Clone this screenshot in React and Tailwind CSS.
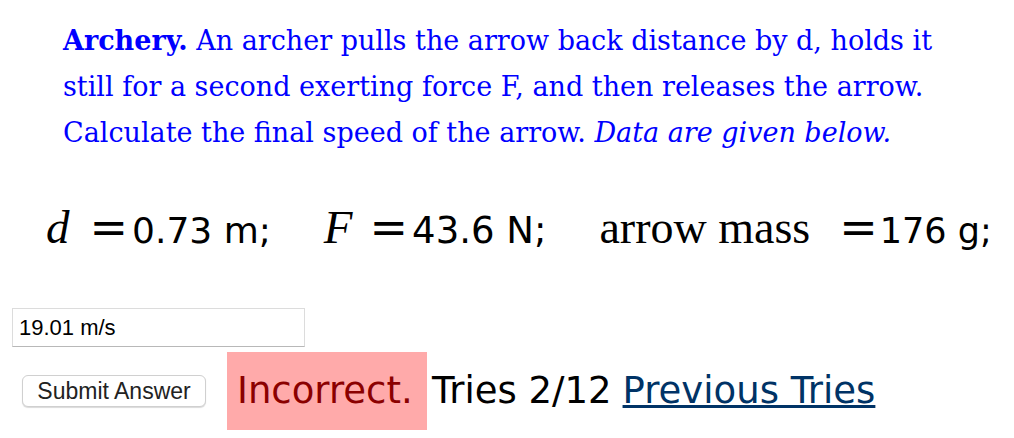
export default function App() {
    return (
        <div className="w-[1014px] h-[438px] bg-white overflow-hidden">
            <div className="pl-[63px] pt-[18px] pr-[60px] text-[#0000ff] text-[27px] leading-[46px] font-['DejaVu_Serif',serif]">
                <b>Archery.</b> An archer pulls the arrow back distance by d, holds it still for a second exerting force F, and then releases the arrow. Calculate the final speed of the arrow. <i>Data are given below.</i>
            </div>

            {/* given data */}
            <div className="flex items-baseline pl-[46px] mt-[46px] text-[37px] leading-[50px] text-black font-['DejaVu_Sans',sans-serif]">
                <span className="italic text-[47px] font-['Liberation_Serif',serif]">d</span>
                <span className="ml-[20px] text-[46px]">=</span>
                <span className="ml-[4px] text-[36px]">0.73 m;</span>
                <span className="ml-[53px] italic text-[47px] font-['Liberation_Serif',serif]">F</span>
                <span className="ml-[17px] text-[46px]">=</span>
                <span className="ml-[4px]">43.6 N;</span>
                <span className="ml-[53px] text-[46px] font-['Liberation_Serif',serif]">arrow mass</span>
                <span className="ml-[29px] text-[46px]">=</span>
                <span className="ml-[2px] text-[35px]">176 g;</span>
            </div>

            <div className="pl-[12px] mt-[52px]">
                <input
                    type="text"
                    defaultValue="19.01 m/s"
                    className="w-[293px] h-[39px] border border-[#dcdcdc] border-b-[#b8b8b8] px-[6px] text-[22px] text-black outline-none font-['Liberation_Sans',sans-serif]"
                />
            </div>

            <div className="flex items-center pl-[22px] mt-[5px]">
                <button className="h-[32px] w-[184px] bg-white border border-[#d0d0d0] rounded-[6px] shadow-[0_1px_1px_rgba(0,0,0,0.15)] text-[23px] leading-none text-[#222] font-['Liberation_Sans',sans-serif]">
                    Submit Answer
                </button>
                <div className="flex items-center ml-[21px] h-[78px] w-[200px] bg-[#ffaaaa] pl-[10px] text-[37px] text-[#8b0000] font-['DejaVu_Sans',sans-serif]">
                    Incorrect.
                </div>
                <span className="ml-[5px] text-[37px] text-black font-['DejaVu_Sans',sans-serif]">Tries 2/12</span>
                <a href="#" className="ml-[11px] text-[37px] text-[#003366] underline font-['DejaVu_Sans',sans-serif]">Previous Tries</a>
            </div>
        </div>
    );
}
